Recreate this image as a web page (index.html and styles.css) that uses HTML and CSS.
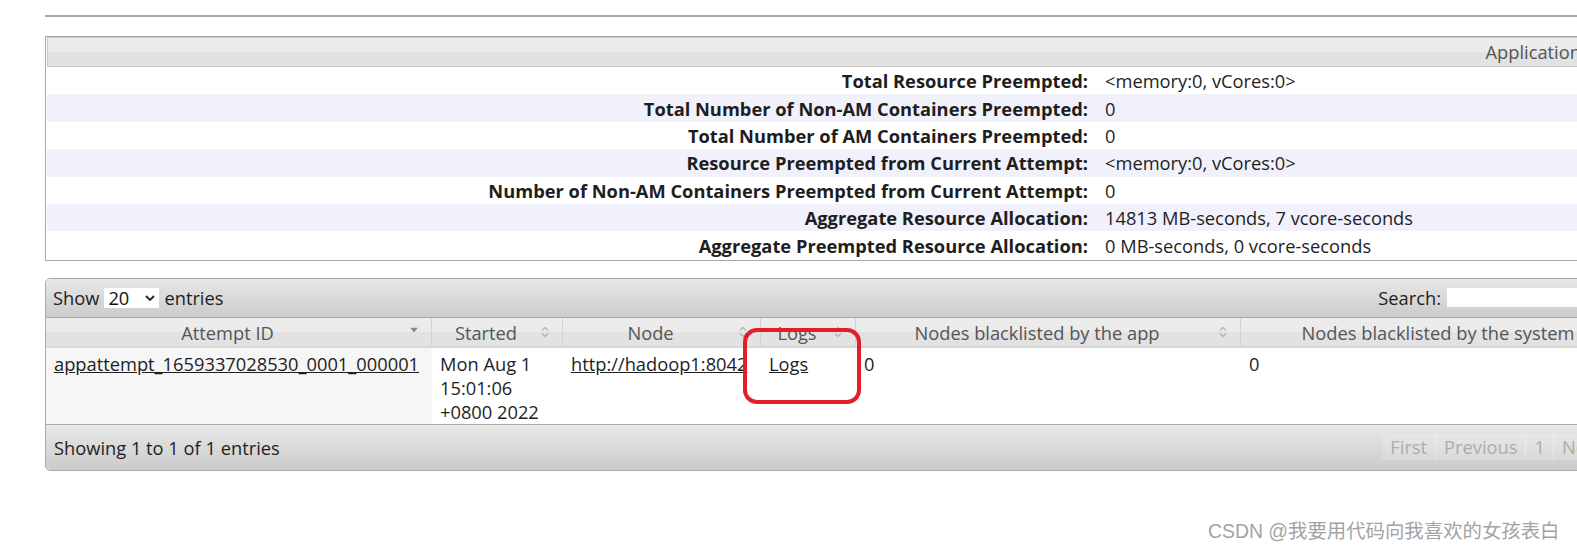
FILE: index.html
```html
<!DOCTYPE html>
<html>
<head>
<meta charset="utf-8">
<link rel="stylesheet" href="styles.css">
</head>
<body>
<div class="page">
  <div class="topline"></div>

  <div class="info">
    <table class="info-table">
      <colgroup><col class="c-label"><col></colgroup>
      <thead>
        <tr><th colspan="2" class="info-title">Application Metrics</th></tr>
      </thead>
      <tbody>
        <tr><th>Total Resource Preempted:</th><td>&lt;memory:0, vCores:0&gt;</td></tr>
        <tr class="alt"><th>Total Number of Non-AM Containers Preempted:</th><td>0</td></tr>
        <tr><th>Total Number of AM Containers Preempted:</th><td>0</td></tr>
        <tr class="alt"><th>Resource Preempted from Current Attempt:</th><td>&lt;memory:0, vCores:0&gt;</td></tr>
        <tr><th>Number of Non-AM Containers Preempted from Current Attempt:</th><td>0</td></tr>
        <tr class="alt"><th>Aggregate Resource Allocation:</th><td>14813 MB-seconds, 7 vcore-seconds</td></tr>
        <tr><th>Aggregate Preempted Resource Allocation:</th><td>0 MB-seconds, 0 vcore-seconds</td></tr>
      </tbody>
    </table>
  </div>

  <div class="dt">
    <div class="toolbar top">
      <div class="length">Show <span class="select">20<svg class="chev" viewBox="0 0 10 6" width="10" height="6"><path d="M1 1 L5 5 L9 1" fill="none" stroke="#222" stroke-width="1.8"/></svg></span> entries</div>
      <div class="search">Search: <span class="input"></span></div>
    </div>
    <table class="grid">
      <colgroup>
        <col class="w-id"><col class="w-started"><col class="w-node"><col class="w-logs"><col class="w-app"><col class="w-sys">
      </colgroup>
      <thead>
        <tr>
          <th><span class="hd">Attempt ID</span><svg class="sort" viewBox="0 0 8 5" width="8" height="5"><path d="M0 0 H8 L4 5 Z" fill="#8a8a8a"/></svg></th>
          <th><span class="hd">Started</span><svg class="sort2" viewBox="0 0 8 12" width="8" height="12"><path d="M1 4.5 L4 1.5 L7 4.5 M1 7.5 L4 10.5 L7 7.5" fill="none" stroke="#b4b4b4" stroke-width="1.4"/></svg></th>
          <th><span class="hd">Node</span><svg class="sort2" viewBox="0 0 8 12" width="8" height="12"><path d="M1 4.5 L4 1.5 L7 4.5 M1 7.5 L4 10.5 L7 7.5" fill="none" stroke="#b4b4b4" stroke-width="1.4"/></svg></th>
          <th><span class="hd">Logs</span><svg class="sort2" viewBox="0 0 8 12" width="8" height="12"><path d="M1 4.5 L4 1.5 L7 4.5 M1 7.5 L4 10.5 L7 7.5" fill="none" stroke="#b4b4b4" stroke-width="1.4"/></svg></th>
          <th><span class="hd">Nodes blacklisted by the app</span><svg class="sort2" viewBox="0 0 8 12" width="8" height="12"><path d="M1 4.5 L4 1.5 L7 4.5 M1 7.5 L4 10.5 L7 7.5" fill="none" stroke="#b4b4b4" stroke-width="1.4"/></svg></th>
          <th class="last"><span class="hd">Nodes blacklisted by the system</span><svg class="sort2" viewBox="0 0 8 12" width="8" height="12"><path d="M1 4.5 L4 1.5 L7 4.5 M1 7.5 L4 10.5 L7 7.5" fill="none" stroke="#b4b4b4" stroke-width="1.4"/></svg></th>
        </tr>
      </thead>
      <tbody>
        <tr>
          <td class="sorted"><a href="#">appattempt_1659337028530_0001_000001</a></td>
          <td>Mon Aug 1 15:01:06 +0800 2022</td>
          <td class="clip"><a href="#">http://hadoop1:8042</a></td>
          <td><a href="#">Logs</a></td>
          <td>0</td>
          <td>0</td>
        </tr>
      </tbody>
    </table>
    <div class="toolbar bottom">
      <div class="status">Showing 1 to 1 of 1 entries</div>
      <div class="paging">
        <span class="btn">First</span><span class="btn">Previous</span><span class="btn">1</span><span class="btn">Next</span><span class="btn">Last</span>
      </div>
    </div>
  </div>
</div>

<div class="annot"></div>
<div class="watermark">CSDN @我要用代码向我喜欢的女孩表白</div>
</body>
</html>
```

FILE: styles.css
```css
html, body {
  margin: 0;
  padding: 0;
  overflow: hidden;
  background: #fff;
}
body {
  font-family: "Open Sans", "Noto Sans CJK SC", sans-serif;
  font-size: 18.3px;
  color: #1e1e1e;
  width: 1577px;
  height: 550px;
  position: relative;
}
.page {
  width: 3200px;
}
.topline {
  height: 2px;
  background: #a8a8a8;
  margin: 15px 0 0 45px;
}

/* info block */
.info {
  margin: 19px 0 0 45px;
  width: 3040px;
  border: 1px solid #a9a9a9;
  padding: 0 1px 1px 1px;
}
.info-table {
  width: 100%;
  border-collapse: separate;
  border-spacing: 0;
  table-layout: fixed;
}
.c-label { width: 1049px; }
.info-title {
  height: 28px;
  padding: 0;
  border: 1px solid #c9c9c9;
  background: linear-gradient(#ececec 0, #ebebeb 50%, #e2e2e2 50%, #e2e2e2 100%);
  color: #555;
  font-weight: normal;
  text-align: center;
  line-height: 28px;
}
.info-table tbody tr { height: 27.4px; }
.info-table tbody th {
  text-align: right;
  font-weight: bold;
  padding: 0 8px 0 0;
  white-space: nowrap;
}
.info-table tbody td {
  padding: 0 0 0 9px;
  white-space: nowrap;
}
.info-table tr.alt th,
.info-table tr.alt td { background: #f1f1fc; }

/* data table */
.dt {
  margin: 17px 0 0 45px;
  width: 1624px;
  border: 1px solid #a9a9a9;
  border-radius: 5px;
  overflow: hidden;
}
.toolbar {
  display: flex;
  align-items: center;
  justify-content: space-between;
  background: linear-gradient(#e8e8e8, #cbcbcb);
  padding: 0 7px;
}
.toolbar.top {
  height: 38px;
  border-bottom: 1px solid #a9a9a9;
}
.toolbar.bottom {
  height: 45px;
  border-top: 1px solid #a9a9a9;
}
.length { display: flex; align-items: center; gap: 5px; }
.select {
  display: inline-flex;
  align-items: center;
  justify-content: space-between;
  width: 47px;
  height: 20px;
  padding: 0 4px;
  background: #fff;
  color: #111;
}
.chev { margin-top: 1px; }
.search { display: flex; align-items: center; gap: 6px; }
.input {
  display: inline-block;
  width: 216px;
  height: 19px;
  background: #fff;
}

.grid {
  width: 100%;
  border-collapse: separate;
  border-spacing: 0;
  table-layout: fixed;
}
.w-id { width: 386px; }
.w-started { width: 131px; }
.w-node { width: 198px; }
.w-logs { width: 95px; }
.w-app { width: 385px; }
.w-sys { width: 429px; }
.grid thead th {
  height: 27px;
  padding: 1px 32px 0 10px;
  font-weight: normal;
  color: #555;
  background: linear-gradient(#ececec 0, #ebebeb 50%, #e2e2e2 50%, #e2e2e2 100%);
  border-right: 1px solid #d3d3d3;
  border-bottom: 2px solid #d8d8d8;
  position: relative;
  white-space: nowrap;
}
.grid thead th.last { padding-right: 44px; }
.hd { display: inline-block; }
.sort, .sort2 {
  position: absolute;
  right: 13px;
  top: 50%;
  transform: translateY(-50%);
}
.sort { margin-top: -2px; }
.grid tbody td {
  vertical-align: top;
  padding: 4px 8px 0 8px;
  line-height: 24px;
  height: 71px;
  background: #fff;
}
.grid tbody td.sorted { background: #f6f6f6; }
.grid tbody td.clip { white-space: nowrap; overflow: hidden; }
.grid a { color: #1e1e1e; text-decoration: underline; }

.status { padding-left: 1px; }
.paging {
  display: flex;
  border-radius: 4px;
  background: rgba(255,255,255,0.18);
  height: 26px;
}
.paging .btn {
  padding: 0 8px;
  line-height: 26px;
  color: #acacac;
  border-right: 1px solid rgba(255,255,255,0.35);
}

/* screenshot annotation overlay */
.annot {
  position: absolute;
  left: 743px;
  top: 328px;
  width: 110px;
  height: 68px;
  border: 4px solid #e41d2a;
  border-radius: 14px;
}
.watermark {
  position: absolute;
  left: 1208px;
  top: 515px;
  font-family: "Liberation Sans", "Noto Sans CJK SC", sans-serif;
  font-size: 19.4px;
  color: #a3a3a3;
  white-space: nowrap;
}
```
